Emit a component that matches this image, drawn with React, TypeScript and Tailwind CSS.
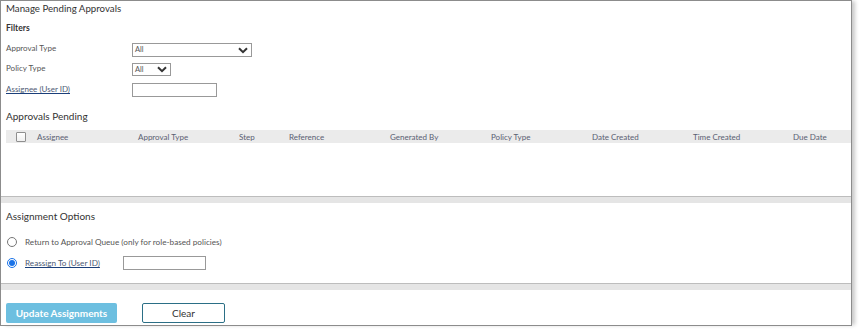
import React from 'react';

const columns = [
  { label: 'Assignee', w: 'w-[101px]' },
  { label: 'Approval Type', w: 'w-[101px]' },
  { label: 'Step', w: 'w-[50px]' },
  { label: 'Reference', w: 'w-[101px]' },
  { label: 'Generated By', w: 'w-[101px]' },
  { label: 'Policy Type', w: 'w-[101px]' },
  { label: 'Date Created', w: 'w-[101px]' },
  { label: 'Time Created', w: 'w-[100px]' },
  { label: 'Due Date', w: 'flex-1' },
];

const Chevron = () => (
  <svg width="10" height="7" viewBox="0 0 10 7" className="shrink-0">
    <path d="M1 1.2 L5 5.2 L9 1.2" fill="none" stroke="#333" strokeWidth="2" />
  </svg>
);

const Separator = () => (
  <div className="h-[7px] border-t border-[#bdbdbd] bg-[#e5e5e5] shrink-0" />
);

const Radio = ({ checked }: { checked?: boolean }) =>
  checked ? (
    <span className="w-[10px] h-[10px] rounded-full border border-[#1a73e8] flex items-center justify-center shrink-0">
      <span className="w-[6px] h-[6px] rounded-full bg-[#1a73e8]" />
    </span>
  ) : (
    <span className="w-[10px] h-[10px] rounded-full border border-[#767676] bg-white shrink-0" />
  );

export default function App() {
  return (
    <div className="w-[862px] h-[336px] bg-white">
      <div className="w-[852px] h-[326px] border border-[#8c8c8c] bg-white flex flex-col font-['Lato',sans-serif] shadow-[4px_0_4px_-1px_rgba(0,0,0,0.22)]">
        {/* Filters */}
        <div className="pl-[5px] flex flex-col shrink-0 h-[195px]">
          <div className="h-[15px] leading-[15px] text-[9.7px] text-[#333]">Manage Pending Approvals</div>
          <div className="h-[27px] leading-[24px] text-[8.5px] font-bold text-[#333]">Filters</div>

          <div className="h-[20px] flex items-start">
            <div className="w-[126px] mt-[1px] leading-[9px] text-[8px] text-[#555]">Approval Type</div>
            <div className="w-[120px] h-[14px] border border-[#999] flex items-center justify-between pl-[2px] pr-[3px]">
              <span className="text-[7.5px] text-[#555] leading-none">All</span>
              <Chevron />
            </div>
          </div>
          <div className="h-[20px] flex items-start">
            <div className="w-[126px] mt-[1px] leading-[9px] text-[8px] text-[#555]">Policy Type</div>
            <div className="w-[39px] h-[13px] border border-[#999] flex items-center justify-between pl-[2px] pr-[3px]">
              <span className="text-[7.5px] text-[#555] leading-none">All</span>
              <Chevron />
            </div>
          </div>
          <div className="h-[20px] flex items-start">
            <div className="w-[126px] mt-[2px] leading-[9px] text-[8px] text-[#4d5a73] underline decoration-[#1b3f7a] underline-offset-[1px]">
              Assignee (User ID)
            </div>
            <div className="w-[85px] h-[14px] border border-[#999]" />
          </div>

          <div className="h-[27px] leading-[26px] text-[10px] text-[#333]">Approvals Pending</div>

          <div className="h-[13px] bg-[#ebebeb] flex items-center text-[8px] text-[#5a6072]">
            <div className="w-[31px] shrink-0 pl-[10px] flex items-center">
              <span className="w-[10px] h-[10px] border border-[#8f8f8f] rounded-[1px] bg-gradient-to-b from-white to-[#f0f0f0]" />
            </div>
            {columns.map((c) => (
              <div key={c.label} className={`${c.w} shrink-0 leading-none whitespace-nowrap`}>
                {c.label}
              </div>
            ))}
          </div>
        </div>

        <Separator />

        {/* Assignment options */}
        <div className="px-[5px] flex flex-col shrink-0 h-[80px]">
          <div className="h-[26px] leading-[26px] text-[10px] text-[#333]">Assignment Options</div>
          <div className="h-[6px]" />
          <div className="h-[14px] flex items-center">
            <span className="ml-[1px] mr-[8px] flex"><Radio /></span>
            <span className="text-[8.2px] text-[#555] leading-none">Return to Approval Queue (only for role-based policies)</span>
          </div>
          <div className="h-[7px]" />
          <div className="h-[14px] flex items-center">
            <span className="ml-[1px] mr-[8px] flex"><Radio checked /></span>
            <span className="w-[98px] text-[8.2px] text-[#4d5a73] leading-[10px] underline decoration-[#1b3f7a] underline-offset-[1px]">
              Reassign To (User ID)
            </span>
            <span className="w-[83px] h-[14px] border border-[#999]" />
          </div>
        </div>

        <Separator />

        {/* Actions */}
        <div className="px-[5px] pt-[13px] flex items-start gap-[25px]">
          <button className="w-[111px] h-[20px] rounded-[2px] bg-[#6dbfe0] text-white text-[10px] font-bold leading-none">
            Update Assignments
          </button>
          <button className="w-[83px] h-[20px] rounded-[2px] border border-[#2b6f86] bg-white text-[#333] text-[10px] leading-none">
            Clear
          </button>
        </div>
      </div>
    </div>
  );
}
